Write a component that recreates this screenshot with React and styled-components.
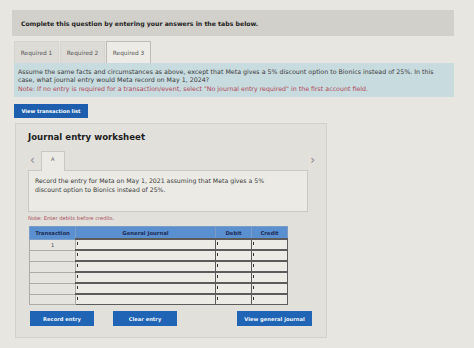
import styled, { createGlobalStyle } from "styled-components";

const GlobalStyle = createGlobalStyle`
  html, body {
    margin: 0;
    padding: 0;
    background: #e8e6e1;
  }
  body {
    width: 474px;
    height: 348px;
    overflow: hidden;
    font-family: "DejaVu Sans", Verdana, sans-serif;
    color: #333;
  }
`;

const rows = ["1", "", "", "", "", ""];

const App = () => {
  return (
    <>
      <GlobalStyle />
      <Page>
        <Banner>Complete this question by entering your answers in the tabs below.</Banner>
        <TabRow>
          <Tab>Required 1</Tab>
          <Tab>Required 2</Tab>
          <Tab active>Required 3</Tab>
        </TabRow>
        <InfoBox>
          Assume the same facts and circumstances as above, except that Meta gives a 5% discount option to Bionics instead of 25%. In this
          <br />
          case, what journal entry would Meta record on May 1, 2024?
          <Note>Note: If no entry is required for a transaction/event, select "No journal entry required" in the first account field.</Note>
        </InfoBox>
        <BlueButton>View transaction list</BlueButton>
        <Worksheet>
          <Heading>Journal entry worksheet</Heading>
          <NavRow>
            <Arrow>‹</Arrow>
            <EntryTab>A</EntryTab>
            <Spacer />
            <Arrow right>›</Arrow>
          </NavRow>
          <EntryBox>
            Record the entry for Meta on May 1, 2021 assuming that Meta gives a 5%
            <br />
            discount option to Bionics instead of 25%.
          </EntryBox>
          <SmallNote>Note: Enter debits before credits.</SmallNote>
          <Table>
            <thead>
              <tr>
                <Th style={{ width: 45 }}>Transaction</Th>
                <Th>General Journal</Th>
                <Th style={{ width: 35 }}>Debit</Th>
                <Th style={{ width: 35 }}>Credit</Th>
              </tr>
            </thead>
            <tbody>
              {rows.map((r, i) => (
                <tr key={i}>
                  <TxCell>{r}</TxCell>
                  <InputCell><Field /></InputCell>
                  <InputCell><Field /></InputCell>
                  <InputCell><Field /></InputCell>
                </tr>
              ))}
            </tbody>
          </Table>
          <ButtonRow>
            <ActionButton>Record entry</ActionButton>
            <ActionButton>Clear entry</ActionButton>
            <ActionButton wide>View general journal</ActionButton>
          </ButtonRow>
        </Worksheet>
      </Page>
    </>
  );
};

const Page = styled.div`
  padding: 10px 20px 0 12px;
`;

const Banner = styled.div`
  background: #d2d0ca;
  height: 26px;
  display: flex;
  align-items: center;
  padding-left: 9px;
  font-size: 6.2px;
  font-weight: bold;
  color: #222;
`;

const TabRow = styled.div`
  display: flex;
  margin: 5px 0 0 2px;
  height: 22px;
`;

const Tab = styled.div`
  width: 43px;
  margin-right: 1px;
  display: flex;
  align-items: center;
  justify-content: center;
  font-size: 5.8px;
  color: #555;
  background: ${(p) => (p.active ? "#ecebe6" : "#dddbd6")};
  border: 1px solid ${(p) => (p.active ? "#bdbbb6" : "#d6d4cf")};
  border-bottom: none;
`;

const InfoBox = styled.div`
  margin-left: 2px;
  width: 432px;
  background: #c8dbdf;
  padding: 5px 4px 4px;
  font-size: 6.3px;
  line-height: 8.4px;
  color: #3a3a3a;
  white-space: nowrap;
`;

const Note = styled.div`
  color: #b0485a;
`;

const BlueButton = styled.div`
  margin: 7px 0 0 2px;
  width: 74px;
  height: 14px;
  background: #1d5fae;
  color: #fff;
  font-size: 5.1px;
  font-weight: bold;
  display: flex;
  align-items: center;
  justify-content: center;
`;

const Worksheet = styled.div`
  margin: 5px 0 0 3px;
  width: 298px;
  height: 206px;
  background: #e2e0db;
  border: 1px solid #d3d1cc;
  padding: 7px 0 0 12px;
`;

const Heading = styled.div`
  font-size: 8.6px;
  font-weight: bold;
  color: #1d1d1d;
  height: 13px;
  padding-top: 1px;
`;

const NavRow = styled.div`
  display: flex;
  align-items: flex-end;
  height: 20px;
  margin-top: 5px;
  width: 287px;
`;

const Arrow = styled.div`
  font-size: 12px;
  color: #888;
  align-self: center;
  margin: ${(p) => (p.right ? "0" : "0 6px 0 2px")};
`;

const Spacer = styled.div`
  flex: 1;
`;

const EntryTab = styled.div`
  width: 24px;
  height: 20px;
  background: #ebeae5;
  border: 1px solid #cac8c3;
  border-bottom: none;
  font-size: 5px;
  color: #555;
  display: flex;
  justify-content: center;
  padding-top: 4px;
  box-sizing: border-box;
  margin-bottom: -1px;
  position: relative;
  z-index: 1;
`;

const EntryBox = styled.div`
  width: 272px;
  height: 34px;
  background: #ebeae5;
  border: 1px solid #cac8c3;
  padding: 6px 0 0 6px;
  font-size: 6.2px;
  line-height: 8.6px;
  color: #3a3a3a;
  white-space: nowrap;
`;

const SmallNote = styled.div`
  font-size: 5.2px;
  color: #a9505c;
  margin-top: 3px;
  height: 9px;
`;

const Table = styled.table`
  border-collapse: collapse;
  width: 259px;
  margin: 2px 0 0 1px;
`;

const Th = styled.th`
  background: #5b90d0;
  color: #1c2c55;
  font-size: 5.3px;
  font-weight: bold;
  height: 11px;
  padding: 0;
  border: 1px solid #7b9cc4;
`;

const TxCell = styled.td`
  height: 9px;
  padding: 0;
  background: #e6e4df;
  border: 1px solid #aeaca8;
  font-size: 5px;
  color: #444;
  text-align: center;
`;

const InputCell = styled.td`
  height: 9px;
  padding: 0;
  border: 1px solid #5c5c5c;
  border-top-width: 2px;
  background: #ecebe6;
`;

const Field = styled.div`
  height: 8px;
  position: relative;
  &::before {
    content: "";
    position: absolute;
    left: 1px;
    top: 1px;
    width: 1px;
    height: 3px;
    background: #333;
  }
`;

const ButtonRow = styled.div`
  display: flex;
  gap: 19px;
  margin: 6px 0 0 2px;
`;

const ActionButton = styled.div`
  width: ${(p) => (p.wide ? "75px" : "64px")};
  height: 15px;
  margin-left: ${(p) => (p.wide ? "41px" : "0")};
  background: #1f64b5;
  color: #f2f5fa;
  font-size: 5.2px;
  font-weight: bold;
  display: flex;
  align-items: center;
  justify-content: center;
`;

export default App;
